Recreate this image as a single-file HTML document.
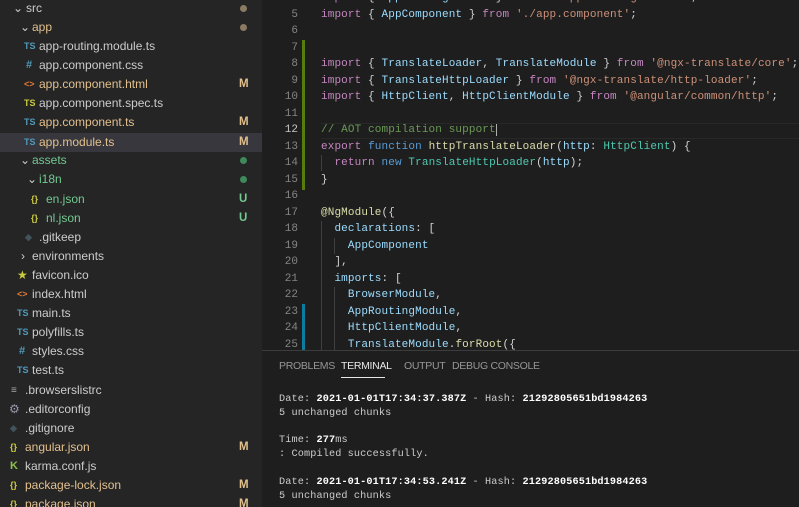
<!DOCTYPE html>
<html><head><meta charset="utf-8"><style>
*{margin:0;padding:0;box-sizing:border-box}
body{width:799px;height:507px;overflow:hidden;background:#1e1e1e;position:relative;font-family:"Liberation Sans",sans-serif}
#side{position:absolute;left:0;top:0;width:262px;height:507px;background:#252526;overflow:hidden}
.r{position:absolute;left:0;width:262px;height:19px;font-size:12px;line-height:19px;color:#cccccc;white-space:nowrap}
.r.sel{background:#37373d}
.r span{position:absolute;top:0}
.m{color:#e2c08d}.u{color:#73c991}
.badge{left:239px;font-size:11.5px;font-weight:bold}
.dot{position:absolute;left:240px;top:6px;width:7px;height:7px;border-radius:50%}
.ic{font-size:9px;font-weight:bold}
#ed{position:absolute;left:262px;top:0;width:537px;height:350px;font-family:"Liberation Mono",monospace;font-size:11px;letter-spacing:0.12px;overflow:hidden}
.l{position:absolute;left:0;height:16.5px;line-height:16.5px;white-space:pre;width:537px}
.n{position:absolute;width:36px;text-align:right;color:#858585;left:0;letter-spacing:0}
.c{position:absolute;left:59px;color:#d4d4d4}
.k{color:#c586c0}.b{color:#569cd6}.v{color:#9cdcfe}.s{color:#ce9178}.t{color:#4ec9b0}.f{color:#dcdcaa}.g{color:#6a9955}
#panel{position:absolute;left:262px;top:350px;width:537px;height:157px;background:#1e1e1e;border-top:1px solid #3c3c3c}
.tab{position:absolute;top:9px;font-size:10.5px;color:#969696;letter-spacing:-0.3px}
#term{position:absolute;left:17px;top:42px;font-family:"Liberation Mono",monospace;font-size:10.2px;letter-spacing:0.13px;line-height:13.8px;color:#cccccc;white-space:pre}
#term b{color:#fff}
</style></head><body>
<div id="side">
<div class="r" style="top:-1.5px"><span style="left:13px;color:#ccc">⌄</span><span style="left:26px">src</span><div class="dot" style="background:#8b7b63"></div></div>
<div class="r" style="top:17.6px"><span style="left:20px">⌄</span><span style="left:32px" class="m">app</span><div class="dot" style="background:#8b7b63"></div></div>
<div class="r" style="top:36.7px"><span class="ic" style="left:24px;color:#519aba">TS</span><span style="left:39px">app-routing.module.ts</span></div>
<div class="r" style="top:55.8px"><span class="ic" style="left:26px;color:#519aba;font-size:11px">#</span><span style="left:39px">app.component.css</span></div>
<div class="r" style="top:74.9px"><span class="ic" style="left:24px;color:#e37933">&lt;&gt;</span><span style="left:39px" class="m">app.component.html</span><span class="badge m">M</span></div>
<div class="r" style="top:94px"><span class="ic" style="left:24px;color:#cbcb41">TS</span><span style="left:39px">app.component.spec.ts</span></div>
<div class="r" style="top:113.1px"><span class="ic" style="left:24px;color:#519aba">TS</span><span style="left:39px" class="m">app.component.ts</span><span class="badge m">M</span></div>
<div class="r sel" style="top:133px"><span class="ic" style="left:24px;color:#519aba">TS</span><span style="left:39px" class="m">app.module.ts</span><span class="badge m">M</span></div>
<div class="r" style="top:151.3px"><span style="left:20px">⌄</span><span style="left:32px" class="u">assets</span><div class="dot" style="background:#3f8a5a"></div></div>
<div class="r" style="top:170.4px"><span style="left:27px">⌄</span><span style="left:39px" class="u">i18n</span><div class="dot" style="background:#3f8a5a"></div></div>
<div class="r" style="top:189.5px"><span class="ic" style="left:31px;color:#cbcb41">{}</span><span style="left:46px" class="u">en.json</span><span class="badge u">U</span></div>
<div class="r" style="top:208.6px"><span class="ic" style="left:31px;color:#cbcb41">{}</span><span style="left:46px" class="u">nl.json</span><span class="badge u">U</span></div>
<div class="r" style="top:227.7px"><span class="ic" style="left:25px;color:#41535b">◆</span><span style="left:39px">.gitkeep</span></div>
<div class="r" style="top:246.8px"><span style="left:21px">›</span><span style="left:32px">environments</span></div>
<div class="r" style="top:265.9px"><span style="left:17px;color:#cbcb41">★</span><span style="left:32px">favicon.ico</span></div>
<div class="r" style="top:285px"><span class="ic" style="left:17px;color:#e37933">&lt;&gt;</span><span style="left:32px">index.html</span></div>
<div class="r" style="top:304.1px"><span class="ic" style="left:17px;color:#519aba">TS</span><span style="left:32px">main.ts</span></div>
<div class="r" style="top:323.2px"><span class="ic" style="left:17px;color:#519aba">TS</span><span style="left:32px">polyfills.ts</span></div>
<div class="r" style="top:342.3px"><span class="ic" style="left:19px;color:#519aba;font-size:11px">#</span><span style="left:32px">styles.css</span></div>
<div class="r" style="top:361.4px"><span class="ic" style="left:17px;color:#519aba">TS</span><span style="left:32px">test.ts</span></div>
<div class="r" style="top:380.5px"><span style="left:11px;color:#aaa;font-size:10px">≡</span><span style="left:25px">.browserslistrc</span></div>
<div class="r" style="top:399.6px"><span style="left:9px;color:#99a;font-size:12px">⚙</span><span style="left:25px">.editorconfig</span></div>
<div class="r" style="top:418.7px"><span class="ic" style="left:10px;color:#41535b">◆</span><span style="left:25px">.gitignore</span></div>
<div class="r" style="top:437.8px"><span class="ic" style="left:10px;color:#cbcb41">{}</span><span style="left:25px" class="m">angular.json</span><span class="badge m">M</span></div>
<div class="r" style="top:456.9px"><span class="ic" style="left:10px;color:#8dc149;font-size:11px">K</span><span style="left:25px">karma.conf.js</span></div>
<div class="r" style="top:476px"><span class="ic" style="left:10px;color:#cbcb41">{}</span><span style="left:25px" class="m">package-lock.json</span><span class="badge m">M</span></div>
<div class="r" style="top:495.1px"><span class="ic" style="left:10px;color:#cbcb41">{}</span><span style="left:25px" class="m">package.json</span><span class="badge m">M</span></div>
</div>
<div id="ed">
<div style="position:absolute;left:40px;top:40px;width:3px;height:150px;background:#587c0c"></div>
<div style="position:absolute;left:40px;top:304px;width:3px;height:50px;background:#0c7d9d"></div>
<div style="position:absolute;left:59px;top:123px;width:478px;height:16px;border-top:1px solid #282828;border-bottom:1px solid #282828"></div>
<div class="l" style="top:-9.75px"><span class="n">4</span><span class="c"><span class="k">import</span> { <span class="v">AppRoutingModule</span> } <span class="k">from</span> <span class="s">'./app-routing.module'</span>;</span></div>
<div class="l" style="top:6.75px"><span class="n">5</span><span class="c"><span class="k">import</span> { <span class="v">AppComponent</span> } <span class="k">from</span> <span class="s">'./app.component'</span>;</span></div>
<div class="l" style="top:23.25px"><span class="n">6</span></div>
<div class="l" style="top:39.75px"><span class="n">7</span></div>
<div class="l" style="top:56.25px"><span class="n">8</span><span class="c"><span class="k">import</span> { <span class="v">TranslateLoader</span>, <span class="v">TranslateModule</span> } <span class="k">from</span> <span class="s">'@ngx-translate/core'</span>;</span></div>
<div class="l" style="top:72.75px"><span class="n">9</span><span class="c"><span class="k">import</span> { <span class="v">TranslateHttpLoader</span> } <span class="k">from</span> <span class="s">'@ngx-translate/http-loader'</span>;</span></div>
<div class="l" style="top:89.25px"><span class="n">10</span><span class="c"><span class="k">import</span> { <span class="v">HttpClient</span>, <span class="v">HttpClientModule</span> } <span class="k">from</span> <span class="s">'@angular/common/http'</span>;</span></div>
<div class="l" style="top:105.75px"><span class="n">11</span></div>
<div class="l" style="top:122.25px"><span class="n" style="color:#c6c6c6">12</span><span class="c"><span class="g">// AOT compilation support</span><span style="border-left:1px solid #aeafad"></span></span></div>
<div class="l" style="top:138.75px"><span class="n">13</span><span class="c"><span class="k">export</span> <span class="b">function</span> <span class="f">httpTranslateLoader</span>(<span class="v">http</span>: <span class="t">HttpClient</span>) {</span></div>
<div class="l" style="top:155.25px"><span class="n">14</span><span class="c">  <span class="k">return</span> <span class="b">new</span> <span class="t">TranslateHttpLoader</span>(<span class="v">http</span>);</span></div>
<div class="l" style="top:171.75px"><span class="n">15</span><span class="c">}</span></div>
<div class="l" style="top:188.25px"><span class="n">16</span></div>
<div class="l" style="top:204.75px"><span class="n">17</span><span class="c"><span class="f">@NgModule</span>({</span></div>
<div class="l" style="top:221.25px"><span class="n">18</span><span class="c">  <span class="v">declarations</span>: [</span></div>
<div class="l" style="top:237.75px"><span class="n">19</span><span class="c">    <span class="v">AppComponent</span></span></div>
<div class="l" style="top:254.25px"><span class="n">20</span><span class="c">  ],</span></div>
<div class="l" style="top:270.75px"><span class="n">21</span><span class="c">  <span class="v">imports</span>: [</span></div>
<div class="l" style="top:287.25px"><span class="n">22</span><span class="c">    <span class="v">BrowserModule</span>,</span></div>
<div class="l" style="top:303.75px"><span class="n">23</span><span class="c">    <span class="v">AppRoutingModule</span>,</span></div>
<div class="l" style="top:320.25px"><span class="n">24</span><span class="c">    <span class="v">HttpClientModule</span>,</span></div>
<div class="l" style="top:336.75px"><span class="n">25</span><span class="c">    <span class="v">TranslateModule</span>.<span class="f">forRoot</span>({</span></div>
<div style="position:absolute;left:59px;top:155px;width:1px;height:16px;background:#404040"></div>
<div style="position:absolute;left:59px;top:221px;width:1px;height:130px;background:#404040"></div>
<div style="position:absolute;left:72px;top:238px;width:1px;height:16px;background:#404040"></div>
<div style="position:absolute;left:72px;top:287px;width:1px;height:64px;background:#404040"></div>
</div>
<div id="panel">
<span class="tab" style="left:17px">PROBLEMS</span>
<span class="tab" style="left:79px;color:#e7e7e7">TERMINAL</span>
<div style="position:absolute;left:79px;top:26px;width:44px;height:1px;background:#e7e7e7"></div>
<span class="tab" style="left:142px">OUTPUT</span>
<span class="tab" style="left:190px">DEBUG CONSOLE</span>
<div id="term">Date: <b>2021-01-01T17:34:37.387Z</b> - Hash: <b>21292805651bd1984263</b>
5 unchanged chunks

Time: <b>277</b>ms
: Compiled successfully.

Date: <b>2021-01-01T17:34:53.241Z</b> - Hash: <b>21292805651bd1984263</b>
5 unchanged chunks</div>
</div>
</body></html>
